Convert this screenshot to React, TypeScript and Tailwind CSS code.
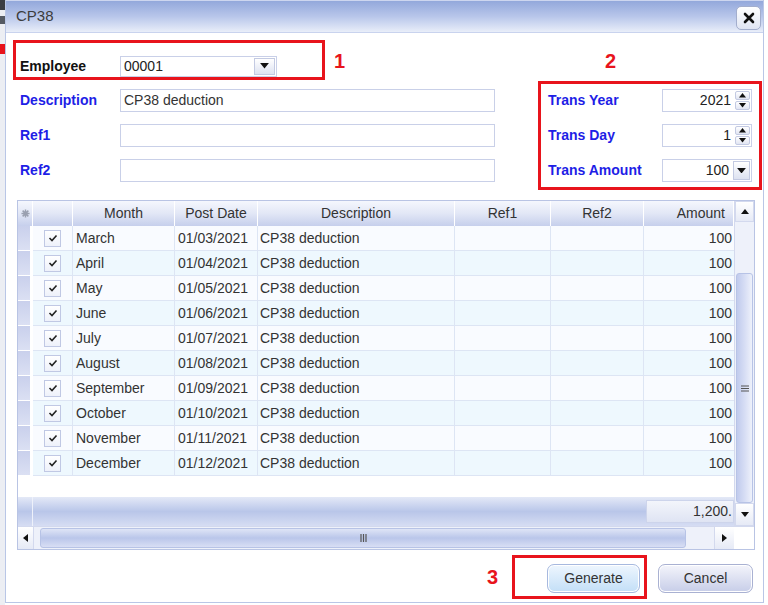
import React from "react";

const months = [
  "March",
  "April",
  "May",
  "June",
  "July",
  "August",
  "September",
  "October",
  "November",
  "December",
];

const COLS = "grid grid-cols-[15px_40px_102px_83px_197px_96px_93px_90px]";

const TriDown = ({ w = 8 }: { w?: number }) => (
  <svg width={w} height={w / 2 + 1} viewBox="0 0 8 5">
    <path d="M0 0 H8 L4 5 Z" fill="#111" />
  </svg>
);

const TriUp = ({ w = 7 }: { w?: number }) => (
  <svg width={w} height={w / 2 + 1} viewBox="0 0 8 5">
    <path d="M0 5 H8 L4 0 Z" fill="#111" />
  </svg>
);

const Spinner = () => (
  <div className="w-[17px] flex flex-col gap-[1px] p-[1px]">
    <div className="flex-1 flex items-center justify-center rounded-[2px] border border-[#c3cae2] bg-linear-to-b from-white to-[#e1e5f2]">
      <TriUp w={7} />
    </div>
    <div className="flex-1 flex items-center justify-center rounded-[2px] border border-[#c3cae2] bg-linear-to-b from-white to-[#e1e5f2]">
      <TriDown w={7} />
    </div>
  </div>
);

const DropBtn = ({ className = "" }: { className?: string }) => (
  <div
    className={`flex items-center justify-center border border-[#c3cae2] bg-linear-to-b from-white to-[#dde2f1] ${className}`}
  >
    <TriDown w={9} />
  </div>
);

const Check = () => (
  <div className="w-[17px] h-[17px] border border-[#c0c8e4] bg-linear-to-b from-white to-[#eef1fa] flex items-center justify-center">
    <svg width="10" height="8" viewBox="0 0 10 8">
      <path d="M1.5 4 L4 6.5 L8.5 1.5" fill="none" stroke="#222" strokeWidth="1.6" />
    </svg>
  </div>
);

const HeadCell = ({ children, align = "center" }: { children?: React.ReactNode; align?: string }) => (
  <div
    className={`h-full flex items-center border-r border-white bg-linear-to-b from-[#f5f7fd] via-[#e2e7f6] to-[#c6cfec] text-[14px] text-[#333] ${
      align === "right" ? "justify-end pr-[8px]" : "justify-center"
    }`}
  >
    {children}
  </div>
);

const Label = ({ children, color = "text-[#1e1ee6]" }: { children: React.ReactNode; color?: string }) => (
  <div className={`font-bold text-[14px] ${color}`}>{children}</div>
);

const TextBox = ({ value = "", className = "" }: { value?: string; className?: string }) => (
  <div
    className={`h-[23px] border border-[#c9d0e8] bg-white flex items-center px-[3px] text-[14px] text-[#333] ${className}`}
  >
    {value}
  </div>
);

const RedNum = ({ n }: { n: string }) => (
  <div className="text-[#e8141c] font-bold text-[20px] leading-none">{n}</div>
);

export default function App() {
  return (
    <div className="w-[768px] h-[605px] bg-white flex overflow-hidden font-['Liberation_Sans',Arial,sans-serif]">
      {/* bits of the window behind */}
      <div className="w-[5px] flex flex-col bg-[#eceef3]">
        <div className="h-[10px] bg-[#3a3d44]" />
        <div className="h-[6px]" />
        <div className="h-[8px] bg-[#555a63]" />
        <div className="h-[20px]" />
        <div className="h-[10px] bg-[#e8141c]" />
        <div className="flex-1" />
      </div>

      <div className="w-[759px] h-[603px] flex flex-col border-x border-b border-[#b9c6e6]">
        {/* title bar */}
        <div className="h-[33px] shrink-0 flex items-center justify-between pl-[10px] pr-[2px] border-t border-[#cdd6ef] border-b border-b-[#c9d3ee] bg-linear-to-b from-[#93a8db] via-[#b8c6ea] to-[#e9eef9]">
          <div className="text-[15px] text-[#3c3c3c]">CP38</div>
          <div className="w-[25px] h-[24px] mt-[2px] rounded-[5px] border border-[#a3aecd] bg-linear-to-b from-white to-[#e0e5f3] flex items-center justify-center">
            <svg width="12" height="12" viewBox="0 0 12 12">
              <path d="M2 2 L10 10 M10 2 L2 10" stroke="#111" strokeWidth="2.6" strokeLinecap="round" />
            </svg>
          </div>
        </div>

        {/* header fields */}
        <div className="flex pt-[7px] pl-[7px]">
          <div className="w-[525px] flex flex-col">
            <div className="flex items-start">
              <div className="w-[312px] h-[40px] border-[3px] border-[#e8141c] flex items-center pt-[12px] pl-[4px]">
                <div className="w-[100px]">
                  <Label color="text-[#111]">Employee</Label>
                </div>
                <div className="w-[157px] h-[21px] border border-[#c9d0e8] bg-white flex items-center justify-between">
                  <span className="pl-[3px] text-[14px] text-[#222]">00001</span>
                  <DropBtn className="w-[21px] h-[17px] mr-[1px]" />
                </div>
              </div>
              <div className="ml-[9px] mt-[11px]">
                <RedNum n="1" />
              </div>
            </div>
            <div className="flex flex-col gap-[12px] mt-[9px] pl-[7px]">
              <div className="flex items-center">
                <div className="w-[100px]">
                  <Label>Description</Label>
                </div>
                <TextBox value="CP38 deduction" className="w-[375px]" />
              </div>
              <div className="flex items-center">
                <div className="w-[100px]">
                  <Label>Ref1</Label>
                </div>
                <TextBox className="w-[375px]" />
              </div>
              <div className="flex items-center">
                <div className="w-[100px]">
                  <Label>Ref2</Label>
                </div>
                <TextBox className="w-[375px]" />
              </div>
            </div>
          </div>

          <div className="flex flex-col">
            <div className="h-[41px] pl-[67px] pt-[11px]">
              <RedNum n="2" />
            </div>
            <div className="w-[224px] h-[109px] border-[3px] border-[#e8141c] pt-[5px] px-[7px] flex flex-col gap-[12px]">
              {[
                ["Trans Year", "2021", "spin"],
                ["Trans Day", "1", "spin"],
                ["Trans Amount", "100", "drop"],
              ].map(([label, value, kind]) => (
                <div key={label} className="h-[23px] flex items-center">
                  <div className="w-[114px]">
                    <Label>{label}</Label>
                  </div>
                  <div className="w-[90px] h-[23px] border border-[#c9d0e8] bg-white flex">
                    <div className="flex-1 flex items-center justify-end pr-[3px] text-[14px] text-[#222]">
                      {value}
                    </div>
                    {kind === "spin" ? <Spinner /> : <DropBtn className="w-[17px] m-[1px]" />}
                  </div>
                </div>
              ))}
            </div>
          </div>
        </div>

        {/* grid */}
        <div className="ml-[11px] mt-[10px] w-[738px] h-[350px] border border-[#b9c4e4] flex flex-col bg-white">
          <div className="flex h-[325px]">
            <div className="w-[716px] flex flex-col">
              <div className={`${COLS} h-[25px]`}>
                <HeadCell>
                  <svg width="9" height="9" viewBox="0 0 10 10">
                    <path d="M5 0.5 V9.5 M0.5 5 H9.5 M1.8 1.8 L8.2 8.2 M8.2 1.8 L1.8 8.2" stroke="#9aa0b0" strokeWidth="1.6" />
                  </svg>
                </HeadCell>
                <HeadCell />
                <HeadCell>Month</HeadCell>
                <HeadCell>Post Date</HeadCell>
                <HeadCell>Description</HeadCell>
                <HeadCell>Ref1</HeadCell>
                <HeadCell>Ref2</HeadCell>
                <HeadCell align="right">Amount</HeadCell>
              </div>

              {months.map((m, i) => (
                <div
                  key={m}
                  className={`${COLS} h-[25px] text-[14px] text-[#333] ${
                    i % 2 === 0 ? "bg-[#f9fbff]" : "bg-[#eef8fe]"
                  }`}
                >
                  <div className="h-full flex bg-white pr-[3px] border-b border-white">
                    <div className="flex-1 bg-linear-to-b from-[#c9d0ec] to-[#dbe0f3]" />
                  </div>
                  <div className="h-full flex items-center justify-center border-r border-b border-[#dde5f4]">
                    <Check />
                  </div>
                  <div className="h-full flex items-center pl-[3px] border-r border-b border-[#dde5f4]">{m}</div>
                  <div className="h-full flex items-center pl-[3px] border-r border-b border-[#dde5f4]">
                    {`01/${String(i + 3).padStart(2, "0")}/2021`}
                  </div>
                  <div className="h-full flex items-center pl-[2px] border-r border-b border-[#dde5f4]">
                    CP38 deduction
                  </div>
                  <div className="h-full border-r border-b border-[#dde5f4]" />
                  <div className="h-full border-r border-b border-[#dde5f4]" />
                  <div className="h-full flex items-center justify-end pr-[2px] border-b border-[#dde5f4]">100</div>
                </div>
              ))}

              <div className="flex-1 bg-white" />

              <div className="h-[29px] flex bg-linear-to-b from-[#e4e9f7] via-[#b9c6e9] to-[#d6ddf3]">
                <div className="w-[15px] border-r border-[#eef1fa]" />
                <div className="w-[613px]" />
                <div className="w-[88px] mt-[3px] h-[23px] border border-[#cdd4eb] bg-linear-to-b from-[#f3f5fb] to-[#dfe4f3] flex items-center justify-end pr-[1px] text-[14px] text-[#333]">
                  1,200.
                </div>
              </div>
            </div>

            {/* vertical scrollbar */}
            <div className="w-[20px] flex flex-col bg-[#eef1fa] border-l border-[#d3d9ee]">
              <div className="h-[21px] flex items-center justify-center border border-[#d3d9ee] bg-linear-to-b from-white to-[#e6eaf6]">
                <TriUp w={8} />
              </div>
              <div className="h-[51px]" />
              <div className="flex-1 mx-[1px] rounded-[3px] border border-[#b7c3e6] bg-linear-to-r from-[#c1cbed] via-[#d6ddf4] to-[#eef1fb] flex items-center justify-center">
                <svg width="8" height="7" viewBox="0 0 8 7">
                  <path d="M0 1 H8 M0 3.5 H8 M0 6 H8" stroke="#555" strokeWidth="1.2" />
                </svg>
              </div>
              <div className="h-[23px] flex items-center justify-center border border-[#d3d9ee] bg-linear-to-b from-white to-[#e6eaf6]">
                <TriDown w={8} />
              </div>
            </div>
          </div>

          {/* horizontal scrollbar */}
          <div className="flex-1 flex border-t border-[#d3d9ee]">
            <div className="w-[716px] flex items-stretch bg-[#eef1fa]">
              <div className="w-[16px] flex items-center justify-center border-r border-[#d3d9ee] bg-linear-to-b from-white to-[#e6eaf6]">
                <svg width="5" height="8" viewBox="0 0 5 8">
                  <path d="M5 0 V8 L0 4 Z" fill="#111" />
                </svg>
              </div>
              <div className="w-[6px]" />
              <div className="w-[646px] my-[1px] rounded-[3px] border border-[#b7c3e6] bg-linear-to-b from-[#dfe5f6] via-[#bac6ea] to-[#d8def4] flex items-center justify-center">
                <svg width="7" height="8" viewBox="0 0 7 8">
                  <path d="M1 0 V8 M3.5 0 V8 M6 0 V8" stroke="#555" strokeWidth="1.2" />
                </svg>
              </div>
              <div className="flex-1" />
              <div className="w-[20px] flex items-center justify-center border-l border-[#d3d9ee] bg-linear-to-b from-white to-[#e6eaf6]">
                <svg width="5" height="8" viewBox="0 0 5 8">
                  <path d="M0 0 V8 L5 4 Z" fill="#111" />
                </svg>
              </div>
            </div>
            <div className="flex-1 bg-white" />
          </div>
        </div>

        {/* buttons */}
        <div className="flex items-center justify-end mt-[5px] pr-[10px]">
          <RedNum n="3" />
          <div className="ml-[14px] w-[135px] h-[44px] border-[3px] border-[#e8141c] flex items-center justify-end pr-[4px] pt-[2px]">
            <button className="w-[93px] h-[29px] rounded-[7px] border border-[#a7b9df] shadow-[inset_0_0_0_1px_#ffffff] bg-linear-to-b from-[#eef6fe] to-[#c3dff7] text-[14px] text-[#333]">
              Generate
            </button>
          </div>
          <button className="ml-[11px] mt-[2px] w-[95px] h-[29px] rounded-[7px] border border-[#a9b1d2] shadow-[inset_0_0_0_1px_#ffffff] bg-linear-to-b from-[#f4f5fb] to-[#c7cde8] text-[14px] text-[#333]">
            Cancel
          </button>
        </div>
      </div>
    </div>
  );
}
